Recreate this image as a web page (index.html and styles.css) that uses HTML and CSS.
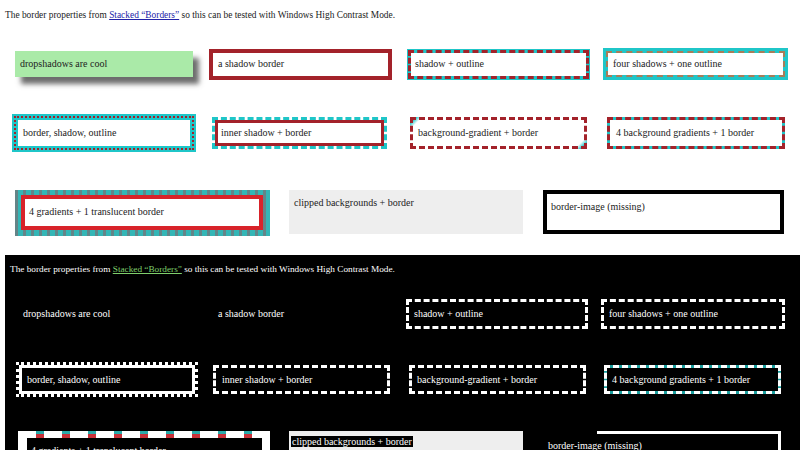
FILE: index.html
```html
<!DOCTYPE html>
<html>
<head>
<meta charset="utf-8">
<title>Stacked borders</title>
<link rel="stylesheet" href="styles.css">
</head>
<body>
<section class="page light">
  <p class="intro">The border properties from <a href="#">Stacked “Borders”</a> so this can be tested with Windows High Contrast Mode.</p>
  <div class="row row1">
    <div class="box b1">dropshadows are cool</div>
    <div class="box b2">a shadow border</div>
    <div class="box b3">shadow + outline</div>
    <div class="box b4">four shadows + one outline</div>
  </div>
  <div class="row row2">
    <div class="box b5">border, shadow, outline</div>
    <div class="box b6">inner shadow + border</div>
    <div class="box b7">background-gradient + border</div>
    <div class="box b8">4 background gradients + 1 border</div>
  </div>
  <div class="row row3">
    <div class="box b9"><div class="b9-inner">4 gradients + 1 translucent border</div></div>
    <div class="box b10">clipped backgrounds + border</div>
    <div class="box b11">border-image (missing)</div>
  </div>
</section>
<section class="page dark">
  <p class="intro">The border properties from <a href="#">Stacked “Borders”</a> so this can be tested with Windows High Contrast Mode.</p>
  <div class="row row1">
    <div class="box d1">dropshadows are cool</div>
    <div class="box d2">a shadow border</div>
    <div class="box d3">shadow + outline</div>
    <div class="box d4">four shadows + one outline</div>
  </div>
  <div class="row row2">
    <div class="box d5">border, shadow, outline</div>
    <div class="box d6">inner shadow + border</div>
    <div class="box d7">background-gradient + border</div>
    <div class="box d8">4 background gradients + 1 border</div>
  </div>
  <div class="row row3">
    <div class="box d9"><div class="d9-inner">4 gradients + 1 translucent border</div></div>
    <div class="box d10"><span class="hl">clipped backgrounds + border</span></div>
    <div class="box d11">border-image (missing)</div>
  </div>
</section>
</body>
</html>
```

FILE: styles.css
```css
* { box-sizing: border-box; }
html, body { margin: 0; padding: 0; overflow: hidden; }
body {
  width: 800px;
  height: 450px;
  background: #fff;
  color: #222;
  font-family: "Liberation Serif", "Times New Roman", serif;
  font-size: 10px;
  line-height: 12px;
}

.intro { margin: 0 0 0 5px; font-size: 9.4px; line-height: 12px; white-space: nowrap; }
.row { display: flex; align-items: center; }
.box { flex: none; white-space: nowrap; }

/* ---------- light ---------- */
.light { height: 255px; padding-top: 9px; }
.light a { color: #2323a8; }
.light .row1 { margin-top: 27px; height: 32px; }
.light .row2 { margin-top: 33px; height: 40px; }
.light .row3 { margin-top: 37px; align-items: flex-start; }

.b1 {
  margin-left: 15px; width: 178px; padding: 7px 5px;
  background: #aaeaa8;
  box-shadow: 6px 7px 5px rgba(60, 60, 60, 0.75);
}
.b2 {
  margin-left: 16px; width: 183px; padding: 5.5px 5px;
  border: 4px solid #a3222a;
}
.b3 {
  margin-left: 16px; width: 181px; padding: 5.5px 4px;
  border: 3px dashed #a3222a;
  background: linear-gradient(#fff, #fff) padding-box, #1fc6c8 border-box;
  box-shadow: 0 0 0 1px #1fc6c8;
}
.b4 {
  margin-left: 17px; width: 179px; padding: 5px 5px;
  border: 2px dashed #a87c58;
  background: linear-gradient(#fff, #fff) padding-box, #1fc6c8 border-box;
  box-shadow: 0 0 0 3px #1fc6c8;
}
.b5 {
  margin-left: 12px; width: 184px; padding: 7px 5px;
  border: 6px solid #1fc6c8;
  outline: 2px dotted #a3222a;
  outline-offset: -4px;
}
.b6 {
  margin-left: 16px; width: 175px; padding: 7px 6px;
  border: 3px dashed #1fc6c8;
  box-shadow: inset 0 0 0 3px #a3222a;
}
.b7 {
  margin-left: 23px; width: 177px; padding: 7px 5px;
  border: 3px dashed #a3222a;
  background: linear-gradient(135deg, #1fc6c8 0 3%, #fff 6% 94%, #1fc6c8 97%) border-box;
}
.b8 {
  margin-left: 20px; width: 178px; padding: 7px 6px;
  border: 3px dashed #a3222a;
  background: linear-gradient(#fff, #fff) padding-box, #1fc6c8 border-box;
}
.b9 {
  margin-left: 15px; width: 255px; height: 46px; padding: 5px 7px 6px 6px;
  background:
    repeating-linear-gradient(90deg, rgba(190, 40, 50, 0.35) 0 3px, transparent 3px 8px),
    #33b6b6;
}
.b9-inner {
  height: 35px; padding: 7px 4px;
  border: 4px solid #d8232a;
  background: #fff;
}
.b10 {
  margin-left: 19px; width: 234px; height: 44px; padding: 7px 5px;
  background: #eee;
}
.b11 {
  margin-left: 20px; width: 241px; height: 44px; padding: 7px 4px;
  border: 4px solid #000;
}

/* ---------- dark (high contrast) ---------- */
.dark {
  margin-left: 5px;
  height: 195px;
  overflow: hidden;
  padding-top: 8px;
  background: #000;
  color: #fff;
}
.dark .intro { font-size: 9.25px; }
.dark a { color: #7fcf6c; }
.dark .row1 { margin-top: 24px; height: 30px; }
.dark .row2 { margin-top: 33px; height: 35px; }
.dark .row3 { margin-top: 34px; align-items: flex-start; }

.d1 { margin-left: 13px; width: 178px; padding: 6px 5px; }
.d2 { margin-left: 13px; width: 183px; padding: 6px 9px; }
.d3 {
  margin-left: 14px; width: 182px; padding: 6px 5px;
  border: 3px dashed #fff;
}
.d4 {
  margin-left: 13px; width: 184px; padding: 6px 5px;
  border: 3px dashed #fff;
}
.d5 {
  margin-left: 14px; width: 176px; padding: 5.5px 5px;
  border: 3px solid #fff;
  outline: 3px dotted #fff;
}
.d6 {
  margin-left: 18px; width: 177px; padding: 5.5px 6px;
  border: 3px dashed #fff;
}
.d7 {
  margin-left: 19px; width: 177px; padding: 5.5px 5px;
  border: 3px dashed #fff;
}
.d8 {
  margin-left: 18px; width: 177px; padding: 5.5px 5px;
  border: 3px dashed #fff;
  background: linear-gradient(#000, #000) padding-box, #1a9e9e border-box;
}
.d9 {
  margin-left: 13px; width: 252px; height: 46px; padding: 7px 8px 7px 9px;
  background:
    repeating-linear-gradient(90deg, #fff 0 18px, transparent 18px 26px),
    linear-gradient(#2aa9a9 0 3px, #c8323a 3px 7px, #fff 7px);
}
.d9-inner {
  height: 32px; padding: 7px 4px;
  background: #000;
}
.d10 {
  margin-left: 19px; width: 234px; height: 44px; padding: 5px 2px;
  background: #eee;
}
.hl { background: #000; color: #fff; padding: 0 1px; }
.d11 {
  margin-left: 20px; width: 238px; height: 44px; padding: 9px 5px;
  border-right: 3px solid #fff;
  background: linear-gradient(#fff, #fff) right top / calc(100% - 54px) 3px no-repeat;
}
```
